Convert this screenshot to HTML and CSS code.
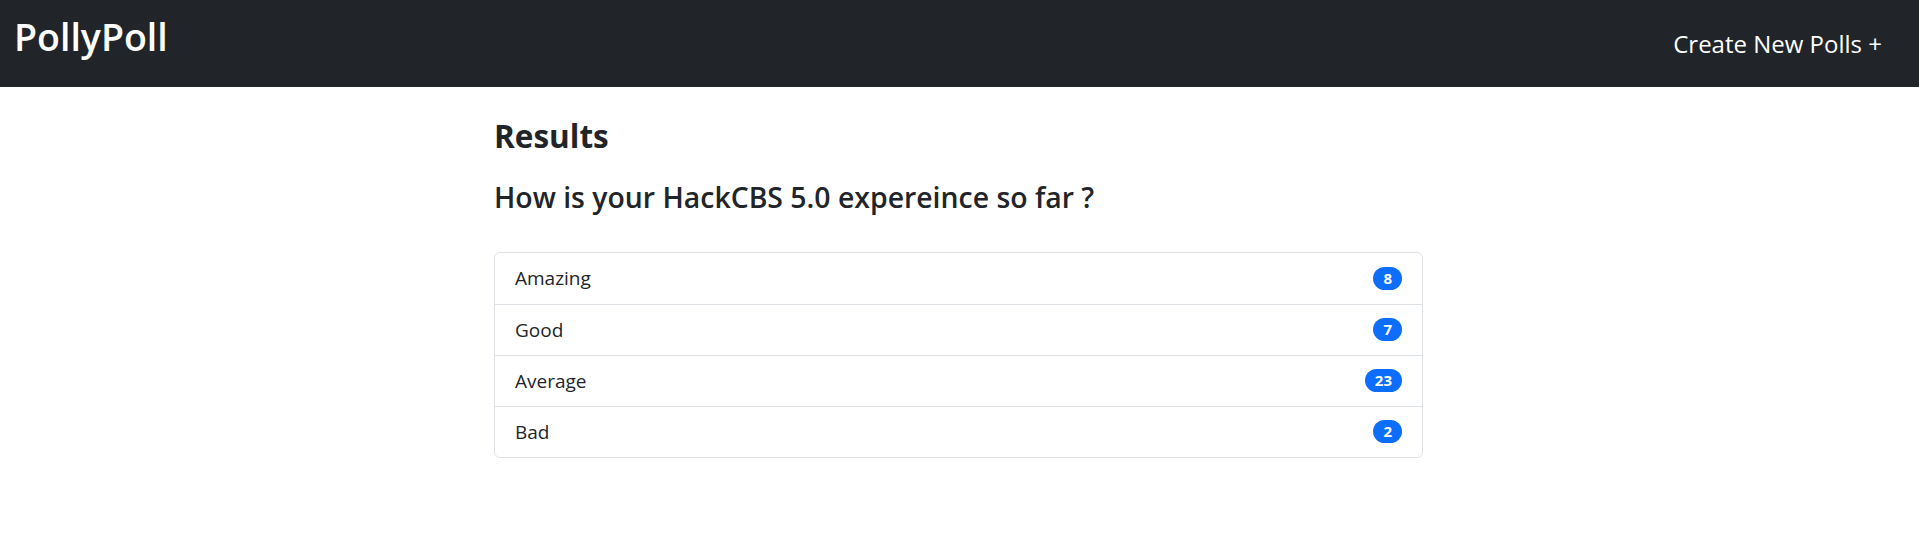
FILE: index.html
```html
<!DOCTYPE html>
<html lang="en">
<head>
<meta charset="utf-8">
<title>PollyPoll</title>
<link rel="stylesheet" href="styles.css">
</head>
<body>
<nav class="navbar">
  <a class="brand" href="#">PollyPoll</a>
  <a class="nav-link" href="#">Create New Polls +</a>
</nav>
<main class="container">
  <h4 class="results-title">Results</h4>
  <h4 class="question">How is your HackCBS 5.0 expereince so far ?</h4>
  <ul class="list-group">
    <li class="list-item"><span>Amazing</span><span class="badge">8</span></li>
    <li class="list-item"><span>Good</span><span class="badge">7</span></li>
    <li class="list-item"><span>Average</span><span class="badge">23</span></li>
    <li class="list-item"><span>Bad</span><span class="badge">2</span></li>
  </ul>
</main>
</body>
</html>
```
FILE: styles.css
```css
* { box-sizing: border-box; }
html, body { margin: 0; padding: 0; }
body {
  font-family: "Open Sans", "Noto Sans", sans-serif;
  color: #212529;
  background: #fff;
  font-size: 20px;
  line-height: 1.5;
}
.navbar {
  height: 87px;
  background: #212529;
  display: flex;
  align-items: center;
  justify-content: space-between;
  padding: 0 37px 0 14px;
}
.brand {
  color: #fff;
  text-decoration: none;
  font-size: 37.5px;
  font-weight: 600;
  line-height: 1.2;
  margin-top: -14px;
}
.nav-link {
  color: #fff;
  text-decoration: none;
  font-size: 24px;
  line-height: 1.5;
  margin-top: 0;
}
.container {
  width: 929px;
  margin: 0 0 0 494px;
  display: flex;
  flex-direction: column;
}
.results-title {
  margin: 30px 0 0 0;
  font-size: 31.5px;
  font-weight: 700;
  line-height: 1.2;
}
.question {
  margin: 25px 0 0 0;
  font-size: 28.4px;
  font-weight: 600;
  line-height: 1.2;
}
.list-group {
  list-style: none;
  margin: 38px 0 0 0;
  padding: 0;
  border: 1px solid #dee2e6;
  border-radius: 6px;
  display: flex;
  flex-direction: column;
}
.list-item {
  display: flex;
  justify-content: space-between;
  align-items: center;
  padding: 10px 20px;
  height: 51px;
  font-size: 19px;
}
.list-item + .list-item {
  border-top: 1px solid #dee2e6;
}
.badge {
  background: #0d6efd;
  color: #fff;
  font-size: 15px;
  font-weight: 700;
  line-height: 1;
  padding: 4px 10px;
  min-width: 27px;
  height: 23px;
  border-radius: 12px;
  display: inline-flex;
  align-items: center;
  justify-content: center;
}
```
